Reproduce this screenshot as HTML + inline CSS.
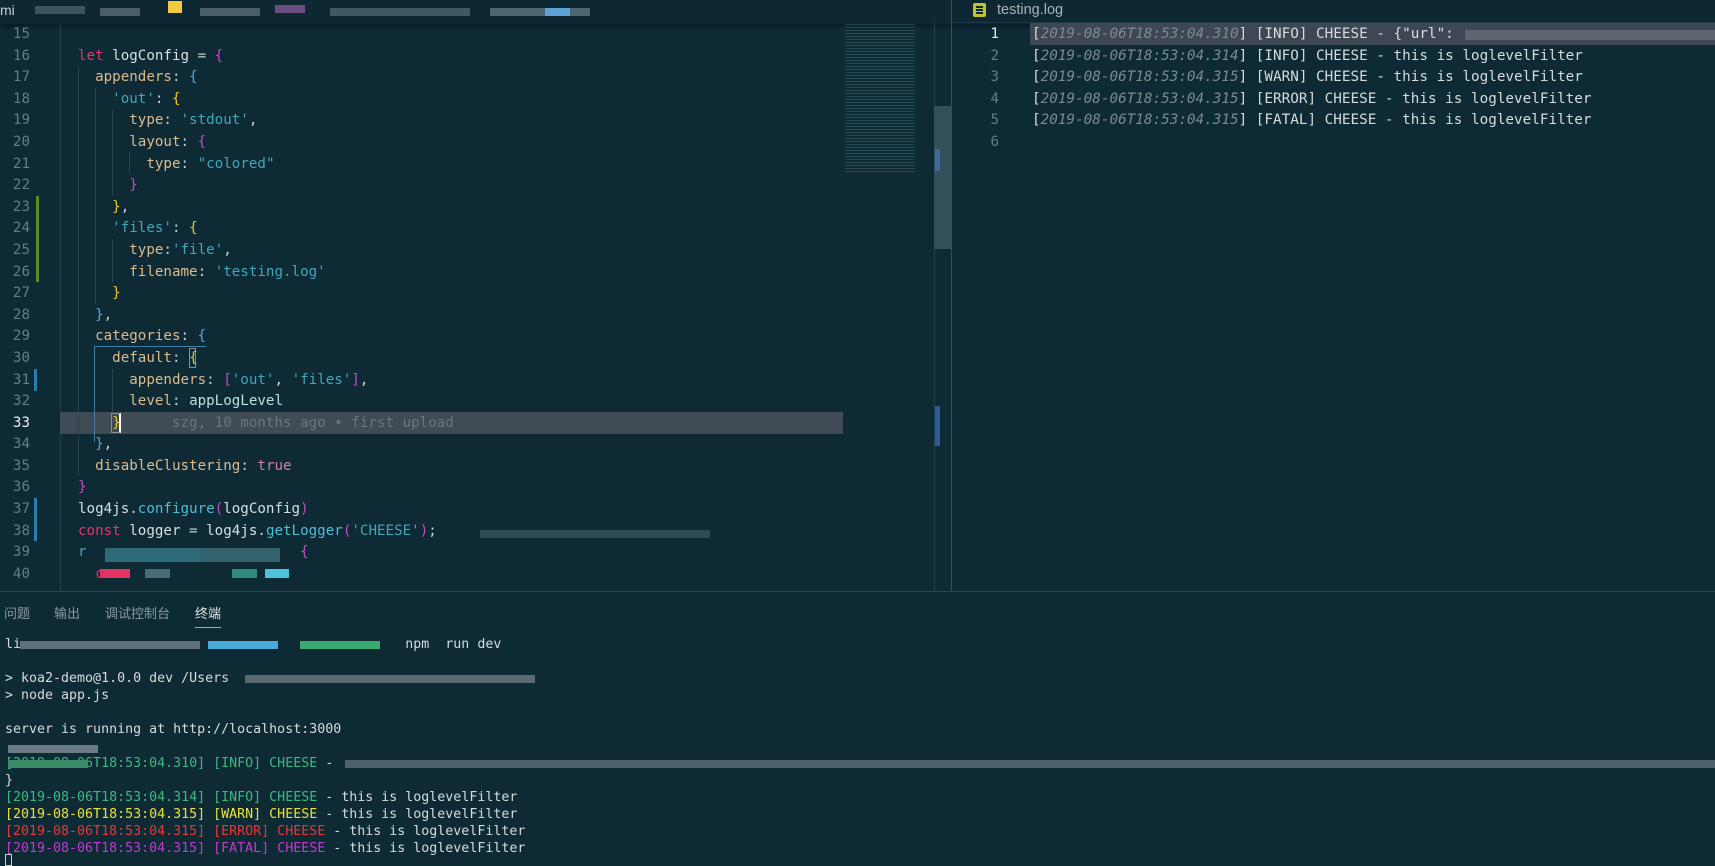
<!DOCTYPE html>
<html><head><meta charset="utf-8"><style>
*{margin:0;padding:0;box-sizing:border-box}
body{width:1715px;height:866px;background:#0e2a35;overflow:hidden;position:relative;font-family:"DejaVu Sans Mono","Liberation Mono",monospace;color:#c8d3d5}
.a{position:absolute;white-space:pre}
.ln{position:absolute;white-space:pre;width:30px;text-align:right;left:0;color:#5f7f8a;font-size:14.2px;line-height:21.6px}
.code{position:absolute;white-space:pre;left:78px;font-size:14.2px;line-height:21.6px}
.k{color:#e8336a}.p{color:#dcbb8e}.s{color:#3fa8bc}.y{color:#e8c62a}.m{color:#c04ec4}.b{color:#55a6dc}.v{color:#b8e2e0}.t{color:#d77fa6}.f{color:#4fbcd8}.w{color:#d6e0e0}
.blk{position:absolute;height:8px}
.r{position:absolute;white-space:pre;left:1032px;font-size:14.3px;line-height:21.6px;color:#d6dcdc}
.r i{color:#7c8a90}
.term{position:absolute;white-space:pre;left:5px;font-size:13.3px;line-height:17px;color:#d6dcdc}
.g{color:#3dba7e}.yy{color:#e7e23b}.rr{color:#e8383a}.mm{color:#c33ad0}
</style></head><body>
<div class="a" style="left:0;top:0;width:1715px;height:24px;background:#0d2833;box-shadow:0 2px 3px #071a22"></div>
<div class="a" style="left:0;top:2px;font-family:'Liberation Sans',sans-serif;font-size:14px;color:#c8d0d0">mi</div>
<div class="blk" style="left:35px;top:6px;width:50px;background:#3a5560"></div>
<div class="blk" style="left:100px;top:8px;width:40px;background:#4a5f68"></div>
<div class="a" style="left:168px;top:1px;width:14px;height:12px;background:#f5c842"></div>
<div class="blk" style="left:200px;top:8px;width:60px;background:#4a5f68"></div>
<div class="blk" style="left:275px;top:5px;width:30px;background:#6a4f80"></div>
<div class="blk" style="left:330px;top:8px;width:140px;background:#3f5862"></div>
<div class="blk" style="left:490px;top:8px;width:100px;background:#4e6670"></div>
<div class="blk" style="left:545px;top:8px;width:25px;background:#5ea0d8"></div>
<div class="a" style="left:60px;top:24px;width:1px;height:567px;background:#22404a"></div>
<div class="a" style="left:36px;top:196px;width:3px;height:86px;background:#5f8a2a"></div>
<div class="a" style="left:34px;top:369px;width:3px;height:22px;background:#2c7ea8"></div>
<div class="a" style="left:34px;top:498px;width:3px;height:43px;background:#2c7ea8"></div>
<div class="a" style="left:60px;top:412px;width:783px;height:22px;background:#404b56"></div>
<div class="a" style="left:78px;top:66px;width:1px;height:410px;background:#27434d"></div>
<div class="a" style="left:95px;top:88px;width:1px;height:216px;background:#27434d"></div>
<div class="a" style="left:112px;top:110px;width:1px;height:86px;background:#27434d"></div>
<div class="a" style="left:129px;top:152px;width:1px;height:22px;background:#27434d"></div>
<div class="a" style="left:112px;top:239px;width:1px;height:44px;background:#27434d"></div>
<div class="a" style="left:112px;top:369px;width:1px;height:43px;background:#27434d"></div>
<div class="a" style="left:94px;top:346px;width:112px;height:1px;background:#3f7fa8"></div>
<div class="a" style="left:94px;top:346px;width:1px;height:96px;background:#3f7fa8"></div>
<div class="a" style="left:189px;top:348px;width:7px;height:20px;border:1px solid #8a9090"></div>
<div class="a" style="left:111px;top:413px;width:10px;height:20px;border:1px solid #8a9090;border-right:2px solid #fff"></div>
<div class="ln" style="top:24px">15
16
17
18
19
20
21
22
23
24
25
26
27
28
29
30
31
32
<span style="color:#e8eeee">33</span>
34
35
36
37
38
39
40</div>
<div class="code" style="top:24px"> 
<span class="k">let</span> <span class="w">logConfig</span> = <span class="m">{</span>
  <span class="p">appenders</span>: <span class="b">{</span>
    <span class="s">'out'</span>: <span class="y">{</span>
      <span class="p">type</span>: <span class="s">'stdout'</span>,
      <span class="p">layout</span>: <span class="m">{</span>
        <span class="p">type</span>: <span class="s">"colored"</span>
      <span class="m">}</span>
    <span class="y">}</span>,
    <span class="s">'files'</span>: <span class="y">{</span>
      <span class="p">type</span>:<span class="s">'file'</span>,
      <span class="p">filename</span>: <span class="s">'testing.log'</span>
    <span class="y">}</span>
  <span class="b">}</span>,
  <span class="p">categories</span>: <span class="b">{</span>
    <span class="p">default</span>: <span class="y">{</span>
      <span class="p">appenders</span>: <span class="m">[</span><span class="s">'out'</span>, <span class="s">'files'</span><span class="m">]</span>,
      <span class="p">level</span>: <span class="v">appLogLevel</span>
    <span class="y">}</span>      <span style="color:#6b757c">szg, 10 months ago • first upload</span>
  <span class="b">}</span>,
  <span class="p">disableClustering</span>: <span class="t">true</span>
<span class="m">}</span>
<span class="w">log4js</span>.<span class="f">configure</span><span class="m">(</span><span class="w">logConfig</span><span class="m">)</span>
<span class="k">const</span> <span class="w">logger</span> = <span class="w">log4js</span>.<span class="f">getLogger</span><span class="m">(</span><span class="s">'CHEESE'</span><span class="m">)</span>;
<span class="s">r</span>                         <span class="m">{</span>
  <span class="k">c</span></div>
<div class="blk" style="left:480px;top:530px;width:230px;background:#2f4a55"></div>
<div class="blk" style="left:105px;top:548px;width:110px;height:14px;background:#2f6a78"></div>
<div class="blk" style="left:200px;top:548px;width:80px;height:14px;background:#33626c"></div>
<div class="blk" style="left:100px;top:569px;width:30px;height:9px;background:#e23362"></div>
<div class="blk" style="left:145px;top:569px;width:25px;height:9px;background:#4a6a74"></div>
<div class="blk" style="left:232px;top:569px;width:25px;height:9px;background:#2e8a7a"></div>
<div class="blk" style="left:265px;top:569px;width:24px;height:9px;background:#4dc3dc"></div>
<div class="a" style="left:845px;top:22px;width:70px;height:150px;opacity:.35;background:repeating-linear-gradient(#0e2a35 0 2px,#4f8a96 2px 3px)"></div>
<div class="a" style="left:934px;top:22px;width:1px;height:569px;background:#22404a"></div>
<div class="a" style="left:934px;top:106px;width:17px;height:143px;background:#34505a"></div>
<div class="a" style="left:935px;top:149px;width:5px;height:22px;background:#3c6aa0"></div>
<div class="a" style="left:935px;top:406px;width:5px;height:40px;background:#2a5d95"></div>
<div class="a" style="left:951px;top:0;width:1px;height:591px;background:#3a4e57"></div>
<div class="a" style="left:973px;top:3px;width:13px;height:14px;background:#c5c22e;border-radius:2px"></div>
<div class="a" style="left:976px;top:6px;width:7px;height:1.5px;background:#0e2a35;box-shadow:0 3px 0 #0e2a35,0 6px 0 #0e2a35"></div>
<div class="a" style="left:997px;top:2px;font-family:'Liberation Sans',sans-serif;font-size:14.5px;color:#a7b4b8">testing.log</div>
<div class="a" style="left:952px;top:22px;width:763px;height:1px;background:#1a3945"></div>
<div class="a" style="left:1030px;top:23px;width:685px;height:22px;background:#3d4854"></div>
<div class="ln" style="left:969px;top:24px;"><span style="color:#e8eeee">1</span>
2
3
4
5
6</div>
<div class="r" style="top:24px">[<i>2019-08-06T18:53:04.310</i>] [INFO] CHEESE - {"url":
[<i>2019-08-06T18:53:04.314</i>] [INFO] CHEESE - this is loglevelFilter
[<i>2019-08-06T18:53:04.315</i>] [WARN] CHEESE - this is loglevelFilter
[<i>2019-08-06T18:53:04.315</i>] [ERROR] CHEESE - this is loglevelFilter
[<i>2019-08-06T18:53:04.315</i>] [FATAL] CHEESE - this is loglevelFilter</div>
<div class="blk" style="left:1465px;top:30px;width:250px;height:10px;background:#5b6670"></div>
<div class="a" style="left:0;top:591px;width:1715px;height:1px;background:#2a4650"></div>
<div class="a" style="left:4px;top:603px;font-family:'Liberation Sans','Noto Sans CJK SC',sans-serif;font-size:13px;color:#8a9ba0">问题</div>
<div class="a" style="left:54px;top:603px;font-family:'Liberation Sans','Noto Sans CJK SC',sans-serif;font-size:13px;color:#8a9ba0">输出</div>
<div class="a" style="left:105px;top:603px;font-family:'Liberation Sans','Noto Sans CJK SC',sans-serif;font-size:13px;color:#8a9ba0">调试控制台</div>
<div class="a" style="left:195px;top:603px;font-family:'Liberation Sans','Noto Sans CJK SC',sans-serif;font-size:13px;color:#dfe6e6">终端</div>
<div class="a" style="left:195px;top:627px;width:26px;height:1px;background:#4fd3c4"></div>
<div class="term" style="top:636px">li                                                npm  run dev

&gt; koa2-demo@1.0.0 dev /Users
&gt; node app.js

server is running at http://localhost:3000

<span class="g">[2019-08-06T18:53:04.310] [INFO] CHEESE</span> -
}
<span class="g">[2019-08-06T18:53:04.314] [INFO] CHEESE</span> - this is loglevelFilter
<span class="yy">[2019-08-06T18:53:04.315] [WARN] CHEESE</span> - this is loglevelFilter
<span class="rr">[2019-08-06T18:53:04.315] [ERROR] CHEESE</span> - this is loglevelFilter
<span class="mm">[2019-08-06T18:53:04.315] [FATAL] CHEESE</span> - this is loglevelFilter</div>
<div class="a" style="left:5px;top:854px;width:7px;height:12px;border:1px solid #ccc"></div>
<div class="blk" style="left:20px;top:641px;width:180px;background:#5f707a"></div>
<div class="blk" style="left:208px;top:641px;width:70px;background:#4aaad8"></div>
<div class="blk" style="left:300px;top:641px;width:80px;background:#3aaa70"></div>
<div class="blk" style="left:245px;top:675px;width:290px;background:#5a6a72"></div>
<div class="blk" style="left:8px;top:745px;width:90px;background:#6a7a82"></div>
<div class="blk" style="left:345px;top:760px;width:1370px;background:#4f606a"></div>
<div class="blk" style="left:8px;top:760px;width:80px;background:#3a8a66"></div>
</body></html>
